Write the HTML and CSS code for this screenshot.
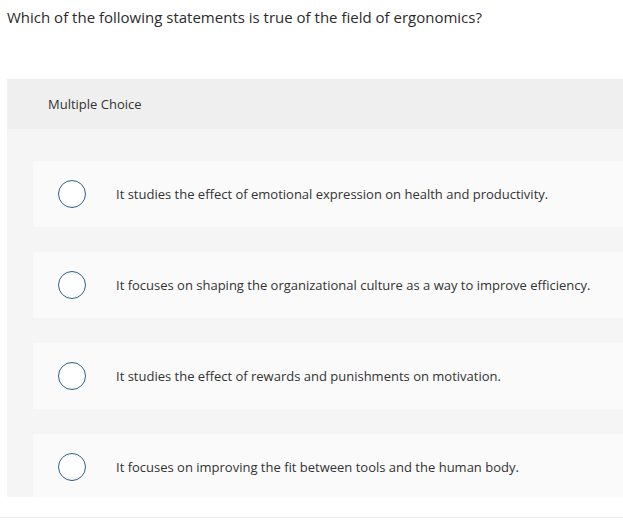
FILE: index.html
```html
<!DOCTYPE html>
<html>
<head>
<meta charset="utf-8">
<link rel="stylesheet" href="styles.css">
</head>
<body>
<div class="question">Which of the following statements is true of the field of ergonomics?</div>
<div class="panel">
  <div class="panel-header">Multiple Choice</div>
  <div class="choices">
    <div class="choice"><span class="radio"></span><span class="choice-text">It studies the effect of emotional expression on health and productivity.</span></div>
    <div class="choice"><span class="radio"></span><span class="choice-text">It focuses on shaping the organizational culture as a way to improve efficiency.</span></div>
    <div class="choice"><span class="radio"></span><span class="choice-text">It studies the effect of rewards and punishments on motivation.</span></div>
    <div class="choice"><span class="radio"></span><span class="choice-text">It focuses on improving the fit between tools and the human body.</span></div>
  </div>
</div>
<div class="footer-line"></div>
</body>
</html>
```
FILE: styles.css
```css
html, body {
  margin: 0;
  padding: 0;
  background: #ffffff;
}
body {
  width: 623px;
  height: 521px;
  overflow: hidden;
  font-family: "Open Sans", "Liberation Sans", sans-serif;
  color: #333333;
}
.question {
  padding: 5px 0 0 7px;
  font-size: 15px;
  line-height: 24px;
  height: 79px;
  box-sizing: border-box;
  color: #2b2b2b;
}
.panel {
  margin-left: 7px;
}
.panel-header {
  height: 50px;
  background: #efefef;
  padding-left: 41px;
  display: flex;
  align-items: center;
  font-size: 13px;
  color: #333333;
  box-sizing: border-box;
}
.choices {
  background: #f5f5f5;
  height: 368px;
  overflow: hidden;
  padding: 32px 0 0 26px;
  box-sizing: border-box;
  display: flex;
  flex-direction: column;
  gap: 25px;
}
.choice {
  flex: 0 0 66px;
  background: #fafafa;
  border-radius: 3px 0 0 3px;
  display: flex;
  align-items: center;
  padding-left: 25px;
}
.radio {
  width: 28px;
  height: 28px;
  border: 1.5px solid #2d5e8e;
  border-radius: 50%;
  box-sizing: border-box;
  background: #ffffff;
  flex: 0 0 28px;
}
.choice-text {
  margin-left: 30px;
  font-size: 13px;
  color: #333333;
  white-space: nowrap;
}
.footer-line {
  margin-top: 20px;
  height: 1px;
  background: #ebebeb;
}
```
